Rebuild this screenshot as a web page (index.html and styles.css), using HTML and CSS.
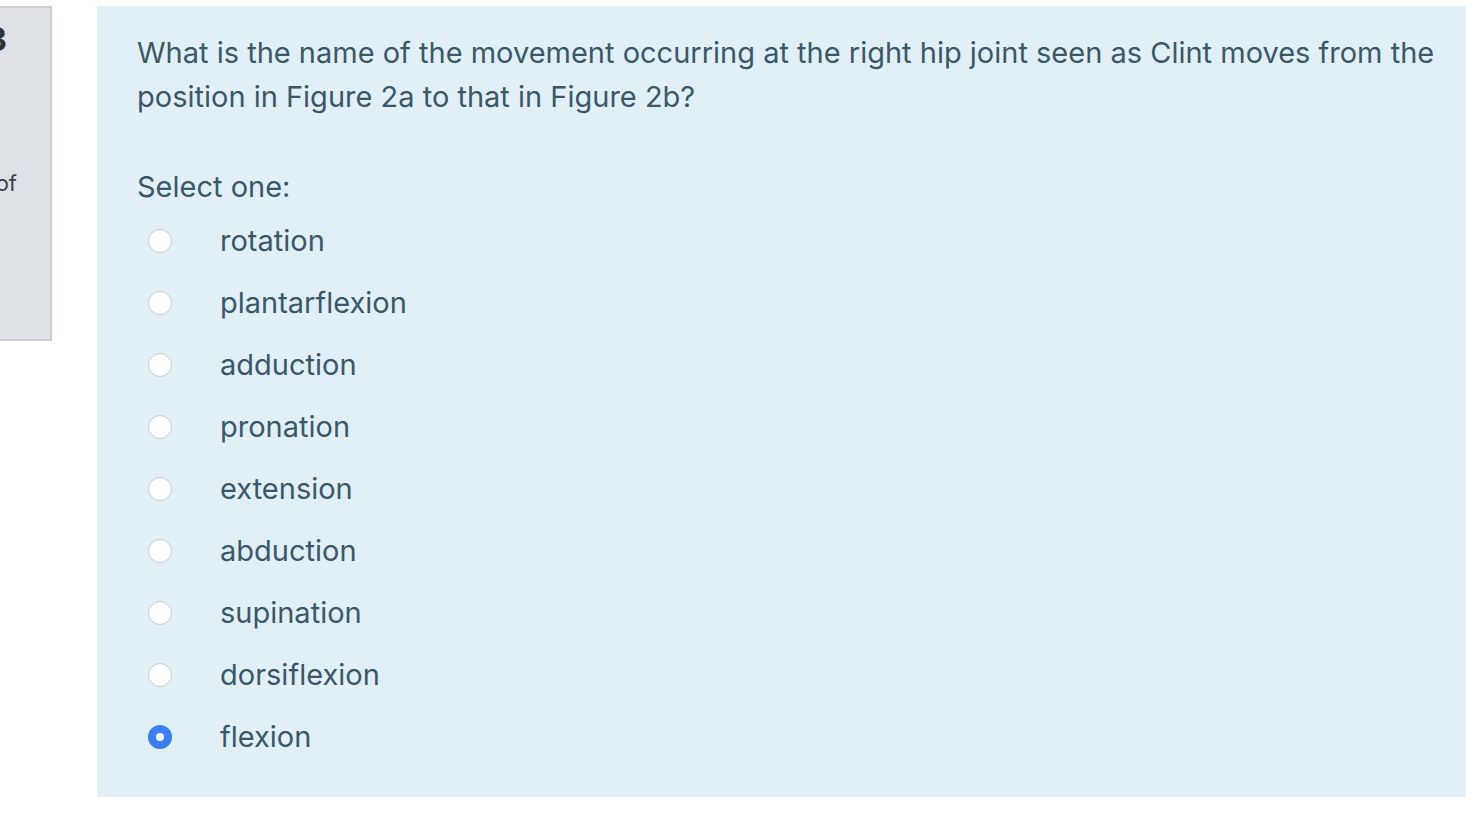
FILE: index.html
```html
<!DOCTYPE html>
<html>
<head>
<meta charset="utf-8">
<link rel="stylesheet" href="styles.css">
</head>
<body>
<div class="page">
  <div class="info">
    <div class="qno">3</div>
    <div class="state">of</div>
  </div>
  <div class="formulation">
    <p class="qtext">What is the name of the movement occurring at the right hip joint seen as Clint moves from the position in Figure 2a to that in Figure 2b?</p>
    <div class="prompt">Select one:</div>
    <div class="answers">
      <label class="opt"><span class="radio"></span><span class="lbl">rotation</span></label>
      <label class="opt"><span class="radio"></span><span class="lbl">plantarflexion</span></label>
      <label class="opt"><span class="radio"></span><span class="lbl">adduction</span></label>
      <label class="opt"><span class="radio"></span><span class="lbl">pronation</span></label>
      <label class="opt"><span class="radio"></span><span class="lbl">extension</span></label>
      <label class="opt"><span class="radio"></span><span class="lbl">abduction</span></label>
      <label class="opt"><span class="radio"></span><span class="lbl">supination</span></label>
      <label class="opt"><span class="radio"></span><span class="lbl">dorsiflexion</span></label>
      <label class="opt"><span class="radio checked"></span><span class="lbl">flexion</span></label>
    </div>
  </div>
</div>
</body>
</html>
```
FILE: styles.css
```css
html, body {
  margin: 0;
  padding: 0;
  background: #ffffff;
  overflow: hidden;
}
body {
  font-family: Inter, "Noto Sans", sans-serif;
  color: #3b5868;
}
.page {
  display: flex;
  align-items: flex-start;
  padding-top: 6px;
  gap: 45px;
}
.info {
  width: 100px;
  margin-left: -48px;
  height: 335px;
  box-sizing: border-box;
  background: #dee1e5;
  border: 2px solid #cbced2;
  position: relative;
  flex: none;
}
.qno {
  position: absolute;
  right: 43px;
  top: 12px;
  font-size: 32px;
  font-weight: 700;
  color: #2f3337;
}
.state {
  position: absolute;
  right: 33px;
  top: 162px;
  font-size: 22px;
  color: #3a3f44;
}
.formulation {
  flex: 1;
  height: 791px;
  box-sizing: border-box;
  background: #e1f0f7;
  padding: 25px 20px 0 40px;
  font-size: 29px;
  line-height: 44px;
}
.qtext {
  margin: 0;
}
.prompt {
  margin-top: 46px;
}
.answers {
  display: flex;
  flex-direction: column;
  margin-top: 1px;
}
.opt {
  display: flex;
  align-items: center;
  height: 62px;
}
.radio {
  width: 24px;
  height: 24px;
  box-sizing: border-box;
  border-radius: 50%;
  background: #ffffff;
  border: 1px solid #c4c7ca;
  margin-left: 11px;
  margin-right: 48px;
  flex: none;
}
.radio.checked {
  background: #ffffff;
  border: 8px solid #3a7ef3;
}
```
